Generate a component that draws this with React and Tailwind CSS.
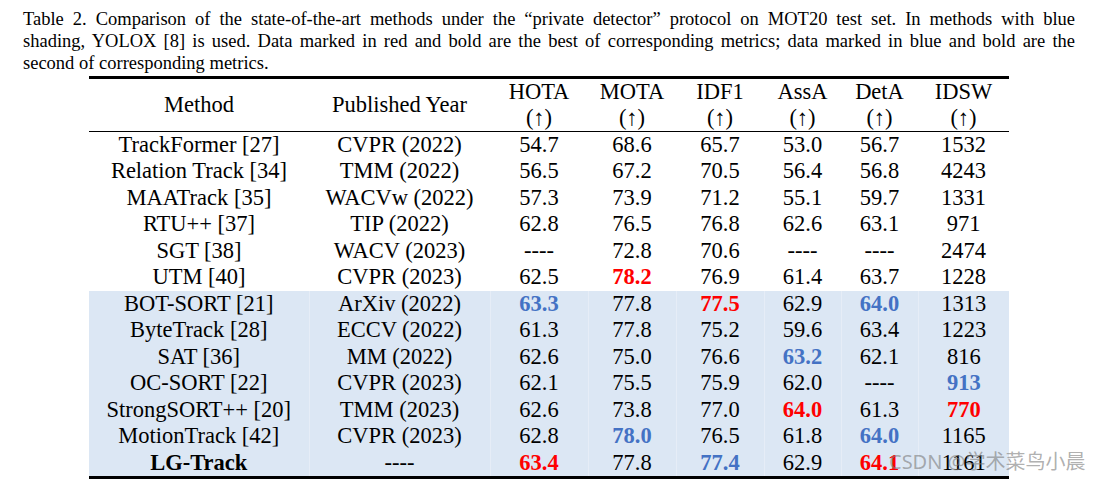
import React from "react";

const R = (v) => ({ v, c: "red" });
const B = (v) => ({ v, c: "blue" });

const rows = [
  ["TrackFormer [27]", "CVPR (2022)", "54.7", "68.6", "65.7", "53.0", "56.7", "1532"],
  ["Relation Track [34]", "TMM (2022)", "56.5", "67.2", "70.5", "56.4", "56.8", "4243"],
  ["MAATrack [35]", "WACVw (2022)", "57.3", "73.9", "71.2", "55.1", "59.7", "1331"],
  ["RTU++ [37]", "TIP (2022)", "62.8", "76.5", "76.8", "62.6", "63.1", "971"],
  ["SGT [38]", "WACV (2023)", "----", "72.8", "70.6", "----", "----", "2474"],
  ["UTM [40]", "CVPR (2023)", "62.5", R("78.2"), "76.9", "61.4", "63.7", "1228"],
  ["BOT-SORT [21]", "ArXiv (2022)", B("63.3"), "77.8", R("77.5"), "62.9", B("64.0"), "1313"],
  ["ByteTrack [28]", "ECCV (2022)", "61.3", "77.8", "75.2", "59.6", "63.4", "1223"],
  ["SAT [36]", "MM (2022)", "62.6", "75.0", "76.6", B("63.2"), "62.1", "816"],
  ["OC-SORT [22]", "CVPR (2023)", "62.1", "75.5", "75.9", "62.0", "----", B("913")],
  ["StrongSORT++ [20]", "TMM (2023)", "62.6", "73.8", "77.0", R("64.0"), "61.3", R("770")],
  ["MotionTrack [42]", "CVPR (2023)", "62.8", B("78.0"), "76.5", "61.8", B("64.0"), "1165"],
  [{ v: "LG-Track", c: "bold" }, "----", R("63.4"), "77.8", B("77.4"), "62.9", R("64.1"), "1161"],
];

const widths = [220, 181, 98, 88, 88, 77, 77, 91];
const metrics = ["HOTA", "MOTA", "IDF1", "AssA", "DetA", "IDSW"];

function Cell({ d, shaded, last }) {
  const item = typeof d === "string" ? { v: d, c: "" } : d;
  const cls =
    item.c === "red"
      ? "font-bold text-[#ff0000]"
      : item.c === "blue"
      ? "font-bold text-[#4472c4]"
      : item.c === "bold"
      ? "font-bold text-black"
      : "text-black";
  return (
    <td
      className={`h-[26.5px] p-0 text-center align-middle whitespace-nowrap ${
        shaded ? "bg-[#dce7f4]" : ""
      } ${shaded && !last ? "border-r border-r-[#e6edf7]" : ""}`}
    >
      <span className={cls}>{item.v}</span>
    </td>
  );
}

export default function App() {
  return (
    <div
      className="relative w-[1095px] h-[483px] bg-white overflow-hidden text-black"
      style={{ fontFamily: '"Liberation Serif", "Times New Roman", serif' }}
    >
      <div className="pl-[23px] pt-[8px] w-[1075px] text-[18.5px] leading-[22px]">
        <p className="text-justify [text-align-last:justify]">
          Table 2. Comparison of the state-of-the-art methods under the “private detector” protocol on
          MOT20 test set. In methods with blue
        </p>
        <p className="text-justify [text-align-last:justify]">
          shading, YOLOX [8] is used. Data marked in red and bold are the best of corresponding
          metrics; data marked in blue and bold are the
        </p>
        <p>second of corresponding metrics.</p>
      </div>
      <div className="pl-[89px] mt-[2px]">
        <table className="table-fixed border-collapse w-[920px] text-[22.5px] leading-[26px]">
          <colgroup>
            {widths.map((w, i) => (
              <col key={i} style={{ width: w }} />
            ))}
          </colgroup>
          <thead>
            <tr className="border-t-[3px] border-t-black border-b border-b-black">
              <th className="h-[52px] p-0 font-normal text-center align-middle">Method</th>
              <th className="h-[52px] p-0 font-normal text-center align-middle whitespace-nowrap">
                Published Year
              </th>
              {metrics.map((m) => (
                <th key={m} className="h-[52px] p-0 font-normal text-center align-middle">
                  <div className="leading-[26px]">{m}</div>
                  <div className="leading-[26px]">(↑)</div>
                </th>
              ))}
            </tr>
          </thead>
          <tbody>
            {rows.map((r, i) => (
              <tr
                key={i}
                className={i === rows.length - 1 ? "border-b-[3px] border-b-black" : ""}
              >
                {r.map((d, j) => (
                  <Cell key={j} d={d} shaded={i >= 6} last={j === r.length - 1} />
                ))}
              </tr>
            ))}
          </tbody>
        </table>
      </div>
      <div
        className="absolute left-[889px] top-[450px] text-[20px] leading-[24px] text-[rgba(125,125,125,0.62)] whitespace-nowrap"
        style={{ fontFamily: '"Noto Sans", "Noto Sans CJK SC", sans-serif' }}
      >
        CSDN @学术菜鸟小晨
      </div>
    </div>
  );
}
